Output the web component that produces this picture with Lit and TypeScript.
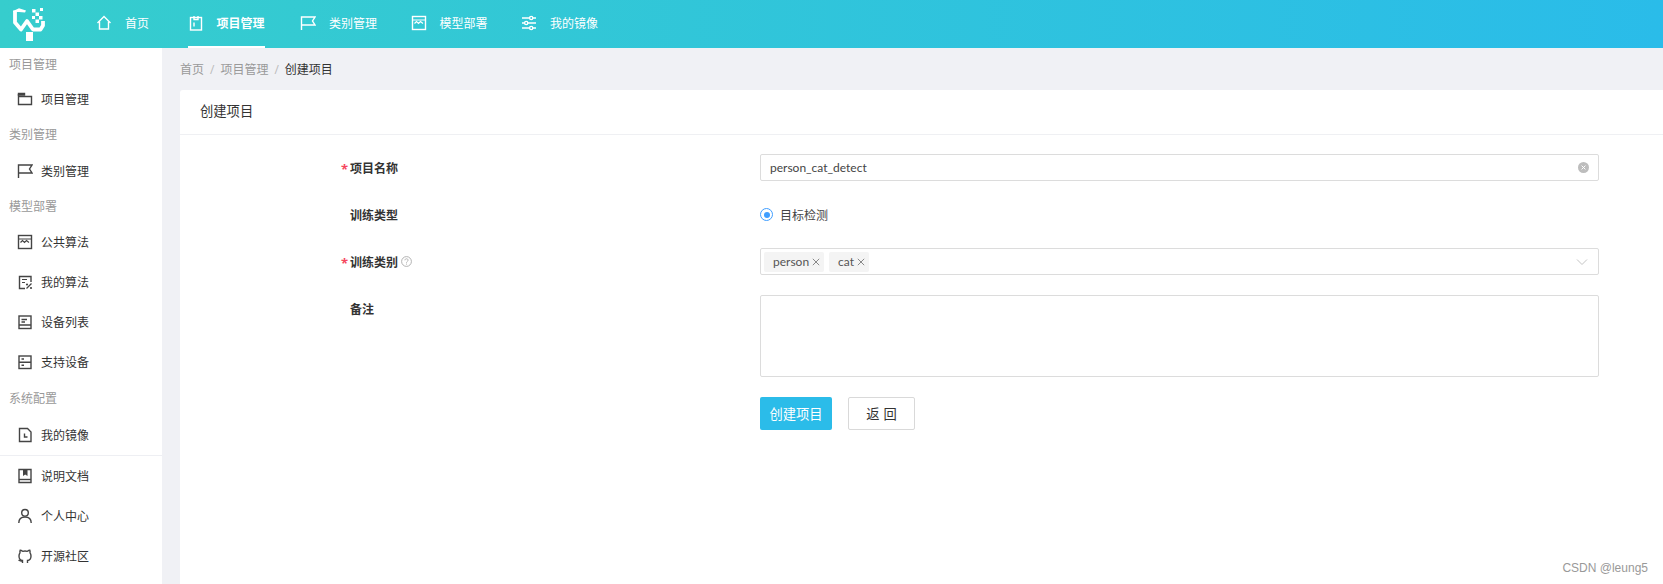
import { LitElement, html, css, svg } from "lit";
import { customElement } from "lit/decorators.js";

const ic = (body: unknown, size = 16) => html`<svg class="ic" width=${size} height=${size} viewBox="0 0 16 16" fill="none" stroke="currentColor" stroke-width="1.4">${body}</svg>`;

const icons: Record<string, unknown> = {
  home: svg`<path d="M1.5 8 8 1.500 14.500 8"/><path d="M3.500 6.500V14h9V6.500"/>`,
  clip: svg`<rect x="2.500" y="2.500" width="11" height="12.500"/><path d="M6 1v3.500h4V1M6 7.500v4"/>`,
  flag: svg`<path d="M1.500 15V2H15l-2.500 4L15 10H1.500"/>`,
  model: svg`<rect x="1.500" y="1.500" width="13" height="13"/><path d="M1.500 5h13M3.500 8.500l2-2 2 2 2-2 2.500 2" stroke-width="1.200"/>`,
  sliders: svg`<path d="M1 3h7.500M12 3h3M1 8h2.500M7 8h8M1 13h7.500M12 13h3"/><circle cx="10.200" cy="3" r="1.600"/><circle cx="5.200" cy="8" r="1.600"/><circle cx="10.200" cy="13" r="1.600"/>`,
  folder: svg`<path d="M1.500 3V13.500H14.500V5.500H1.500"/><path d="M1.500 2.500H7.500V4H1.500Z" fill="currentColor"/>`,
  algo: svg`<path d="M14 8V2.500H2.500V14.500H8"/><path d="M5 5.500H10M5 8.500H8" stroke-width="1.200"/><path d="M9.500 14.500 14.500 9.500" stroke-width="1.200"/><circle cx="10" cy="10.500" r="1.100" fill="currentColor" stroke="none"/><circle cx="14" cy="14" r="1.100" fill="currentColor" stroke="none"/>`,
  list: svg`<rect x="2" y="2" width="12" height="12.500"/><path d="M4.500 5.500H10M4.500 8H8M2 11h12"/>`,
  device: svg`<rect x="2" y="2" width="12" height="12.500"/><path d="M2 8.200h12M4.500 5h2.500M4.500 11.200h2.500"/>`,
  image: svg`<path d="M2.500 1.500H10.500L14 5V14.500H2.500Z"/><path d="M7.500 6.500V10H10.500"/>`,
  book: svg`<path d="M2 14.500V1.500H14V14.500H2Z"/><path d="M2 11.500H14"/><path d="M6 1.500H10.500V8L8.200 6.400 6 8Z" fill="currentColor" stroke="none"/>`,
  user: svg`<circle cx="8" cy="4.800" r="3.300"/><path d="M1.800 15c0-4 2.600-6 6.200-6s6.200 2 6.200 6"/>`,
  github: svg`<path d="M5.500 15v-2.500C3.300 12.500 2 10.800 2 8c0-1.300.3-2.300 1-3.100-.2-.9-.1-1.800.2-2.700 1 0 1.800.6 2.500 1.100a8 8 0 0 1 4.600 0c.7-.5 1.500-1.100 2.500-1.100.3.9.4 1.800.2 2.700.7.8 1 1.800 1 3.100 0 2.800-1.300 4.500-3.500 4.500V15"/><path d="M1.500 12c1 .8 2.200 1.200 4 .8"/>`,
};

const nav = [
  ["home", "首页", false],
  ["clip", "项目管理", true],
  ["flag", "类别管理", false],
  ["model", "模型部署", false],
  ["sliders", "我的镜像", false],
] as const;

const side = [
  { label: "项目管理", cls: "first", items: [["folder", "项目管理"]] },
  { label: "类别管理", cls: "", items: [["flag", "类别管理"]] },
  { label: "模型部署", cls: "", items: [["model", "公共算法"], ["algo", "我的算法"], ["list", "设备列表"], ["device", "支持设备"]] },
  { label: "系统配置", cls: "sys", items: [["image", "我的镜像"]] },
];
const bottom = [["book", "说明文档"], ["user", "个人中心"], ["github", "开源社区"]];

@customElement("app-root")
export class AppRoot extends LitElement {
  static styles = css`
    :host { display: block; height: 584px; width: 1663px; overflow: hidden; position: relative; background: #f0f1f5;
      font-family: "Open Sans", "Noto Sans CJK SC", sans-serif; font-size: 12px; color: #333; }
    * { box-sizing: border-box; }
    .ic { display: block; flex: none; }
    .top { height: 48px; display: flex; background: linear-gradient(90deg, #36cdcd, #2abce9); color: #fff; }
    .logo { width: 96px; flex: none; padding: 8px 0 0 13px; }
    .nav { display: flex; gap: 33.5px; }
    .nav a { display: flex; align-items: center; gap: 13px; height: 48px; border-bottom: 2px solid transparent; white-space: nowrap; }
    .nav a:first-child { margin-right: 5px; }
    .nav a.on { border-bottom-color: #fff; font-weight: 700; margin-right: 2px; }
    .body { display: flex; height: 536px; }
    .side { width: 162px; flex: none; background: #fff; display: flex; flex-direction: column; }
    .grp { height: 31.5px; line-height: 32px; padding-left: 9px; color: #999; flex: none; }
    .grp.first { height: 31px; line-height: 33px; }
    .grp.sys { height: 32.5px; line-height: 34px; }
    .item { height: 40px; flex: none; display: flex; align-items: center; gap: 8px; padding-left: 17px; color: #333; }
    .item svg { color: #444; }
    .sep { border-top: 1px solid #eeeff3; height: 1px; flex: none; }
    .main { flex: 1; min-width: 0; padding-left: 18px; }
    .crumb { height: 42px; display: flex; align-items: center; gap: 6px; color: #999; }
    .crumb b { font-weight: 400; color: #333; }
    .crumb i { font-style: normal; color: #bbb; }
    .card { background: #fff; height: 494px; border-radius: 3px 0 0 0; }
    .title { height: 45px; line-height: 42px; padding-left: 20px; font-size: 13.300px; color: #333; border-bottom: 1px solid #eff0f3; }
    .form { display: grid; grid-template-columns: 419px 839px; margin-left: 161px; padding-top: 19px; row-gap: 20px; }
    .lbl { display: flex; align-items: center; height: 27px; font-weight: 700; color: #333; padding-left: 9px; position: relative; }
    .lbl.req::before { content: "*"; position: absolute; left: 0; top: 6px; color: #f5475e; font-weight: 700; font-size: 13px; }
    .q { margin-left: 3px; color: #aaa; }
    .box { height: 27px; border: 1px solid #dcdcdc; border-radius: 2px; display: flex; align-items: center; background: #fff; }
    .text { padding: 0 10px 0 9px; justify-content: space-between; color: #444; font-family: "Lato", "Noto Sans CJK SC", sans-serif; }
    .clear { width: 11px; height: 11px; border-radius: 50%; background: #bdbdbd; margin-right: -1px; color: #fff; }
    .clear svg { display: block; }
    .radio { display: flex; align-items: center; gap: 7px; height: 27px; color: #444; }
    .dot { width: 13px; height: 13px; border: 1px solid #3f9eff; border-radius: 50%; padding: 2.500px; }
    .dot::after { content: ""; display: block; width: 6px; height: 6px; background: #3f9eff; border-radius: 50%; }
    .sel { padding: 0 10px 0 3px; gap: 5px; }
    .tag { height: 20px; display: flex; align-items: center; gap: 3px; padding: 0 4px 0 9px; background: #f4f4f4; border-radius: 2px; color: #555; font-family: "Lato", "Noto Sans CJK SC", sans-serif; }
    .tag svg { color: #888; }
    .chev { margin-left: auto; color: #c4c4c4; }
    .area { height: 82px; }
    .btns { display: flex; gap: 16px; grid-column: 2; }
    .btn { height: 33px; display: flex; align-items: center; justify-content: center; border-radius: 2px; font-size: 13.300px; }
    .pri { width: 72px; background: #2bbce9; color: #fff; }
    .sec { width: 67px; background: #fff; border: 1px solid #d9d9d9; color: #333; letter-spacing: 4px; padding-left: 4px; }
    .mark { position: absolute; right: 15px; bottom: 9px; color: #999; font-size: 12px; font-family: "Liberation Sans", sans-serif; }
  `;

  private x() {
    return html`<svg width="8" height="8" viewBox="0 0 8 8" stroke="currentColor" fill="none"><path d="M.8.8l6.400 6.400M7.200.8.8 7.200"/></svg>`;
  }

  render() {
    return html`
      <header class="top">
        <div class="logo">
          <svg width="34" height="33" viewBox="0 0 34 33" fill="#fff">
            <path d="M2 2.500V14.500L8 21.500 14 13 20 21.500H27.500L30 17.500V13" fill="none" stroke="#fff" stroke-width="3.800" stroke-linejoin="round"/>
            <path d="M.2 3 6 .2 13 2.500 12 4.500 6 4H.2Z"/>
            <rect x="13" y="24" width="7" height="10"/>
            <rect x="19" y="1" width="3.500" height="3.500"/><rect x="27" y="0" width="3" height="3"/>
            <rect x="22.500" y="4.500" width="3.500" height="3.500"/><rect x="19" y="8" width="3" height="3"/><rect x="26" y="8" width="3.500" height="3.500"/><rect x="22.500" y="11.500" width="3.500" height="3.500"/>
          </svg>
        </div>
        <nav class="nav">
          ${nav.map(([i, t, on]) => html`<a class=${on ? "on" : ""}>${ic(icons[i])}<span>${t}</span></a>`)}
        </nav>
      </header>
      <div class="body">
        <aside class="side">
          ${side.map((g) => html`<div class="grp ${g.cls}">${g.label}</div>${g.items.map(([i, t]) => html`<div class="item">${ic(icons[i])}<span>${t}</span></div>`)}`)}
          <div class="sep"></div>
          ${bottom.map(([i, t]) => html`<div class="item">${ic(icons[i])}<span>${t}</span></div>`)}
        </aside>
        <main class="main">
          <div class="crumb"><span>首页</span><i>/</i><span>项目管理</span><i>/</i><b>创建项目</b></div>
          <section class="card">
            <div class="title">创建项目</div>
            <div class="form">
              <div class="lbl req">项目名称</div>
              <div class="box text"><span>person_cat_detect</span>
                <span class="clear"><svg width="11" height="11" viewBox="0 0 11 11" stroke="currentColor" fill="none"><path d="M3.600 3.600l3.800 3.800M7.400 3.600 3.600 7.400"/></svg></span></div>
              <div class="lbl">训练类型</div>
              <div class="radio"><span class="dot"></span><span>目标检测</span></div>
              <div class="lbl req">训练类别
                <svg class="q" width="11" height="11" viewBox="0 0 11 11" fill="none" stroke="currentColor" stroke-width=".9"><circle cx="5.500" cy="5.500" r="4.900"/><path d="M3.900 4.300c0-2 3.200-2 3.200-.1 0 1.200-1.600 1.200-1.600 2.500M5.500 7.600v1"/></svg></div>
              <div class="box sel">
                <span class="tag">person ${this.x()}</span><span class="tag">cat ${this.x()}</span>
                <svg class="chev" width="12" height="8" viewBox="0 0 12 8" fill="none" stroke="currentColor"><path d="M1 1.500 6 6.500 11 1.500"/></svg>
              </div>
              <div class="lbl">备注</div>
              <div class="box area"></div>
              <div class="btns"><div class="btn pri">创建项目</div><div class="btn sec">返回</div></div>
            </div>
          </section>
        </main>
      </div>
      <div class="mark">CSDN @leung5</div>
    `;
  }
}
